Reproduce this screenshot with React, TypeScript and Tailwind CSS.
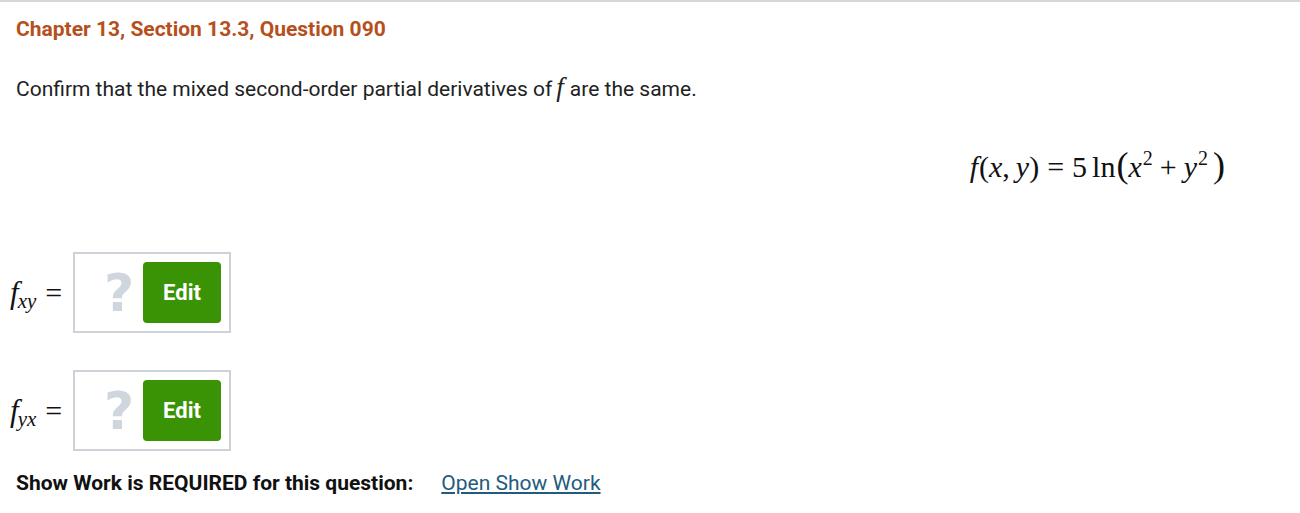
import React from "react";

const roboto = { fontFamily: "Roboto, 'Liberation Sans', sans-serif" };
const serif = { fontFamily: "'Liberation Serif', 'Times New Roman', serif" };

function AnswerRow({ sub }: { sub: string }) {
  return (
    <div className="flex items-center">
      <div className="w-[73px] pl-[10px] flex items-center" style={serif}>
        <span className="italic text-[31px] leading-none text-[#111]">f</span>
        <span className="italic text-[21px] leading-none text-[#111] mt-[18px] -ml-[1px]">{sub}</span>
        <span className="text-[30px] leading-none text-[#111] ml-[9px]">=</span>
      </div>
      <div className="w-[158px] h-[81px] border-2 border-[#cdd2d8] flex items-center pl-[24px]">
        <span className="text-[52px] font-bold text-[#d0d6dd] leading-none w-[40px] text-center" style={{ fontFamily: "'DejaVu Sans', 'Liberation Sans', sans-serif" }}>?</span>
        <button className="ml-[4px] w-[78px] h-[61px] rounded-[4px] bg-[#3a9304] text-white font-bold text-[22px]" style={roboto}>Edit</button>
      </div>
    </div>
  );
}

export default function App() {
  return (
    <div className="w-[1300px] h-[513px] bg-white border-t-2 border-[#d7d7d7] relative" style={roboto}>
      <div className="pl-[16px] pt-[15px]">
        <h1 className="text-[21px] font-bold text-[#b5501d] leading-[24px]">Chapter 13, Section 13.3, Question 090</h1>
        <p className="mt-[34px] text-[21px] text-[#222] leading-[24px] flex items-baseline">
          <span>Confirm that the mixed second-order partial derivatives of</span>
          <span className="italic text-[27px] ml-[4px] mr-[6px]" style={serif}>f</span>
          <span>are the same.</span>
        </p>
      </div>
      <div className="flex justify-end pr-[75px] mt-[46px]" style={serif}>
        <div className="text-[30px] text-[#111] leading-none flex items-baseline">
          <span className="italic">f</span>
          <span className="ml-[1px]">(</span>
          <span className="italic">x</span>
          <span>,</span>
          <span className="italic ml-[6px]">y</span>
          <span>)</span>
          <span className="ml-[8px]">=</span>
          <span className="ml-[8px]">5</span>
          <span className="ml-[5px]">ln</span>
          <span className="text-[36px] leading-none ml-[1px]">(</span>
          <span className="italic">x</span>
          <span className="text-[20px] relative -top-[12px] ml-[1px]">2</span>
          <span className="ml-[7px]">+</span>
          <span className="italic ml-[7px]">y</span>
          <span className="text-[20px] relative -top-[12px] ml-[1px]">2</span>
          <span className="text-[36px] leading-none ml-[5px]">)</span>
        </div>
      </div>
      <div className="mt-[69px]">
        <AnswerRow sub="xy" />
      </div>
      <div className="mt-[37px]">
        <AnswerRow sub="yx" />
      </div>
      <div className="pl-[16px] mt-[17px] flex items-center text-[21px]">
        <span className="font-bold text-[#111]">Show Work is REQUIRED for this question:</span>
        <a className="ml-[28px] text-[#225b7e] underline underline-offset-2" href="#">Open Show Work</a>
      </div>
    </div>
  );
}
